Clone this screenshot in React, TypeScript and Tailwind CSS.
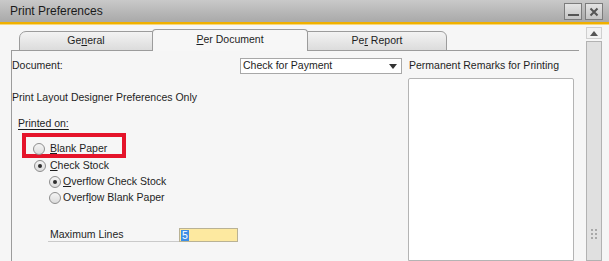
import type { ReactNode } from "react";

const font = { fontFamily: '"Liberation Sans", Arial, sans-serif' };

function Radio({ checked = false }: { checked?: boolean }) {
  return (
    <span className="flex h-[12px] w-[12px] shrink-0 items-center justify-center rounded-full border border-[#8e8e8e] bg-gradient-to-b from-[#f4f4f4] to-[#dcdcdc]">
      {checked && <span className="h-[4px] w-[4px] rounded-full bg-[#2e2e2e]" />}
    </span>
  );
}

function U({ children }: { children: ReactNode }) {
  return <span className="underline underline-offset-[1px]">{children}</span>;
}

function Tab({
  children,
  active = false,
  className = "",
}: {
  children: ReactNode;
  active?: boolean;
  className?: string;
}) {
  return (
    <div
      className={`relative -mb-px flex items-center justify-center border border-[#9c9c9c] text-[10.5px] text-[#1e1e1e] ${
        active
          ? "z-10 h-[22px] rounded-t-[4px] border-b-0 bg-[#f7f7f7] pb-[2px]"
          : "h-[20px] bg-gradient-to-b from-[#f3f3f3] to-[#dcdcdc]"
      } ${className}`}
    >
      <span>{children}</span>
    </div>
  );
}

export default function App() {
  return (
    <div
      className="flex h-[261px] w-[609px] flex-col overflow-hidden bg-[#f6f6f6] text-[#1e1e1e]"
      style={font}
    >
      {/* title bar */}
      <div className="flex h-[22px] shrink-0 items-center justify-between bg-gradient-to-b from-[#c9c9c9] to-[#a9a9a9] pl-[10px] pr-[6px]">
        <span className="text-[12px] text-[#1a1a1a]">Print Preferences</span>
        <div className="flex gap-[3px] pt-[1px]">
          <div className="flex h-[17px] w-[18px] items-end justify-center border border-[#7c7c7c] bg-gradient-to-b from-[#e4e4e4] to-[#c4c4c4] pb-[3px]">
            <span className="h-[2px] w-[11px] bg-[#555]" />
          </div>
          <div className="flex h-[17px] w-[18px] items-center justify-center border border-[#7c7c7c] bg-gradient-to-b from-[#e4e4e4] to-[#c4c4c4]">
            <svg width="10" height="10" viewBox="0 0 10 10">
              <path d="M1.5 1.5 L8.5 8.5 M8.5 1.5 L1.5 8.5" stroke="#555" strokeWidth="2" />
            </svg>
          </div>
        </div>
      </div>
      <div className="h-[2px] shrink-0 bg-[#f0b000]" />
      <div className="h-px shrink-0 bg-[#f7d77a]" />

      <div className="flex min-h-0 flex-1">
        {/* main area */}
        <div className="flex w-[579px] flex-col">
          <div className="mt-[4px] flex h-[21px] items-end pl-[19px]">
            <Tab className="w-[134px] rounded-tl-[7px]">
              Ge<U>n</U>eral
            </Tab>
            <Tab active className="-ml-px w-[156px]">
              <U>P</U>er Document
            </Tab>
            <Tab className="-ml-px w-[140px] rounded-tr-[6px]">
              Pe<U>r</U> Report
            </Tab>
          </div>

          <div className="ml-[11px] flex flex-1 border-l border-t border-[#9c9c9c] text-[10.5px]">
            {/* left column */}
            <div className="flex w-[396px] flex-col">
              <div className="mt-[7px] flex h-[16px] items-center">
                <span className="w-[228px]">Document:</span>
                <div className="flex h-[16px] w-[162px] items-center justify-between border border-[#a8a8a8] bg-white pl-[2px] pr-[4px]">
                  <span>Check for Payment</span>
                  <svg width="8" height="5" viewBox="0 0 8 5">
                    <path d="M0 0 H8 L4 5 Z" fill="#333" />
                  </svg>
                </div>
              </div>

              <div className="mt-[17px] flex h-[13px] items-center">
                Print Layout Designer Preferences Only
              </div>

              <div className="mt-[13px] flex h-[13px] items-center pl-[6px]">
                <span className="underline underline-offset-[2px]">Printed on:</span>
              </div>

              <div className="ml-[10px] mt-[3px] flex h-[25px] w-[104px] items-center border-[4px] border-[#e5142a] pl-[7px] pt-[7px]">
                <Radio />
                <span className="ml-[5px]">
                  <U>B</U>lank Paper
                </span>
              </div>

              <div className="flex h-[16px] items-center pl-[22px]">
                <Radio checked />
                <span className="ml-[4px]">
                  <U>C</U>heck Stock
                </span>
              </div>
              <div className="flex h-[16px] items-center pl-[37px]">
                <Radio checked />
                <span className="ml-[2px]">
                  <U>O</U>verflow Check Stock
                </span>
              </div>
              <div className="flex h-[16px] items-center pl-[37px]">
                <Radio />
                <span className="ml-[2px]">
                  Overf<U>l</U>ow Blank Paper
                </span>
              </div>

              <div className="ml-[36px] mt-[22px] flex h-[14px] items-stretch">
                <span className="flex w-[131px] items-center border-b border-[#cacaca] pl-[2px]">
                  Maximum Lines
                </span>
                <div className="flex h-[14px] w-[59px] items-center border border-[#b9b295] bg-[#fde9a0] pl-[1px]">
                  <span className="bg-[#3b8ee6] px-[1px] leading-[11px] text-white">5</span>
                </div>
              </div>
            </div>

            {/* right column */}
            <div className="flex w-[166px] flex-col">
              <div className="mt-[7px] flex h-[16px] items-center pl-px">
                Permanent Remarks for Printing
              </div>
              <div className="mt-[4px] flex-1 rounded-t-[2px] border border-[#b4b4b4] bg-white" />
            </div>
          </div>
        </div>

        {/* scrollbar */}
        <div className="ml-[7px] mt-[2px] flex w-[16px] flex-col">
          <div className="flex h-[12px] items-center justify-center border border-[#cfcfcf] bg-[#f2f2f2]">
            <svg width="8" height="5" viewBox="0 0 8 5">
              <path d="M0 5 H8 L4 0 Z" fill="#555" />
            </svg>
          </div>
          <div className="mt-[2px] flex flex-1 items-end justify-center border border-[#b2b2b2] bg-[#e0e0e0] pb-[21px]">
            <div className="grid grid-cols-2 gap-[2px]">
              <span className="h-[2px] w-[2px] bg-[#a8a8a8]" />
              <span className="h-[2px] w-[2px] bg-[#a8a8a8]" />
              <span className="h-[2px] w-[2px] bg-[#a8a8a8]" />
              <span className="h-[2px] w-[2px] bg-[#a8a8a8]" />
              <span className="h-[2px] w-[2px] bg-[#a8a8a8]" />
              <span className="h-[2px] w-[2px] bg-[#a8a8a8]" />
            </div>
          </div>
        </div>
      </div>
    </div>
  );
}
